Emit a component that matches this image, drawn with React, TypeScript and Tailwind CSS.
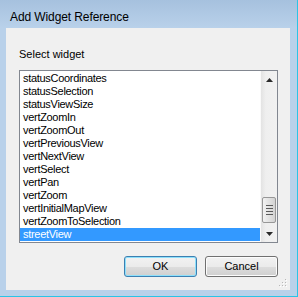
import React from 'react'

const items = [
  'statusCoordinates',
  'statusSelection',
  'statusViewSize',
  'vertZoomIn',
  'vertZoomOut',
  'vertPreviousView',
  'vertNextView',
  'vertSelect',
  'vertPan',
  'vertZoom',
  'vertInitialMapView',
  'vertZoomToSelection',
  'streetView',
]

const selected = 'streetView'

function ScrollBar() {
  return (
    <div className="flex h-full w-[17px] flex-col border-l border-[#fafafa] bg-[linear-gradient(to_right,#e3e3e3,#efefef_30%,#f1f1f1)]">
      <div className="flex h-[17px] items-center justify-center">
        <svg width="7" height="4" viewBox="0 0 7 4">
          <path d="M3.5 0 L7 4 L0 4 Z" fill="#2a2a2a" />
        </svg>
      </div>
      <div className="flex flex-1 flex-col justify-end pb-[2px]">
        <div className="mx-[1px] flex h-[26px] flex-col items-center justify-center gap-[2px] rounded-[2px] border border-[#979797] bg-[linear-gradient(to_right,#f2f2f2,#e2e2e2_50%,#d3d3d3)]">
          <div className="h-[1px] w-[7px] bg-[#5a5a5a]" />
          <div className="h-[1px] w-[7px] bg-[#5a5a5a]" />
          <div className="h-[1px] w-[7px] bg-[#5a5a5a]" />
          <div className="h-[1px] w-[7px] bg-[#5a5a5a]" />
        </div>
      </div>
      <div className="flex h-[17px] items-center justify-center">
        <svg width="7" height="4" viewBox="0 0 7 4">
          <path d="M0 0 L7 0 L3.5 4 Z" fill="#2a2a2a" />
        </svg>
      </div>
    </div>
  )
}

function ListBox() {
  return (
    <div className="flex h-[173px] w-[259px] border border-[#828790] bg-white">
      <div className="flex-1 pt-[1px]">
        {items.map((it) => (
          <div
            key={it}
            className={
              it === selected
                ? 'h-[13px] bg-[#3399ff] pl-[3px] text-[11px] leading-[13px] tracking-[-0.3px] text-white'
                : 'h-[13px] pl-[3px] text-[11px] leading-[13px] tracking-[-0.3px] text-black'
            }
          >
            {it}
          </div>
        ))}
      </div>
      <ScrollBar />
    </div>
  )
}

function SizeGrip() {
  const dots = [
    [6, 0],
    [6, 3],
    [3, 3],
    [6, 6],
    [3, 6],
    [0, 6],
  ]
  return (
    <svg width="8" height="8" viewBox="0 0 8 8" className="absolute right-[3px] bottom-[3px]">
      {dots.map(([x, y], i) => (
        <g key={i}>
          <rect x={x + 1} y={y + 1} width="1" height="1" fill="#ffffff" />
          <rect x={x} y={y} width="1" height="1" fill="#b8b8b8" />
        </g>
      ))}
    </svg>
  )
}

export default function App() {
  return (
    <div
      className="flex h-[297px] w-[298px] flex-col border-r border-b border-[#2bc4e6] bg-[#b9d1ea] text-black"
      style={{ fontFamily: '"Liberation Sans", Arial, sans-serif' }}
    >
      <div className="h-[28px] bg-[linear-gradient(to_bottom,#a6c1de,#b9d1ea)] pt-[9px] pl-[10px] text-[12px] leading-[16px] tracking-[-0.1px] text-black">
        Add Widget Reference
      </div>
      <div className="flex flex-1 pr-[7px] pb-[6px] pl-[6px]">
        <div className="relative flex h-[262px] w-[284px] flex-col bg-[#f0f0f0] pt-[20px] pl-[13px]">
          <div className="h-[13px] text-[11px] leading-[13px]">Select widget</div>
          <div className="mt-[9px]">
            <ListBox />
          </div>
          <div className="mt-[13px] flex w-[259px] justify-end gap-[8px]">
            <button className="h-[21px] w-[73px] rounded-[3px] border border-[#3c7fb1] bg-[linear-gradient(to_bottom,#f2f2f2_0%,#ebebeb_50%,#dddddd_51%,#cfcfcf_100%)] text-[11px] leading-[13px] text-black shadow-[inset_0_0_0_1px_#8ee0fb]">
              OK
            </button>
            <button className="h-[21px] w-[73px] rounded-[3px] border border-[#707070] bg-[linear-gradient(to_bottom,#f2f2f2_0%,#ebebeb_50%,#dddddd_51%,#cfcfcf_100%)] text-[11px] leading-[13px] text-black shadow-[inset_0_0_0_1px_#fcfcfc]">
              Cancel
            </button>
          </div>
          <SizeGrip />
        </div>
      </div>
    </div>
  )
}
